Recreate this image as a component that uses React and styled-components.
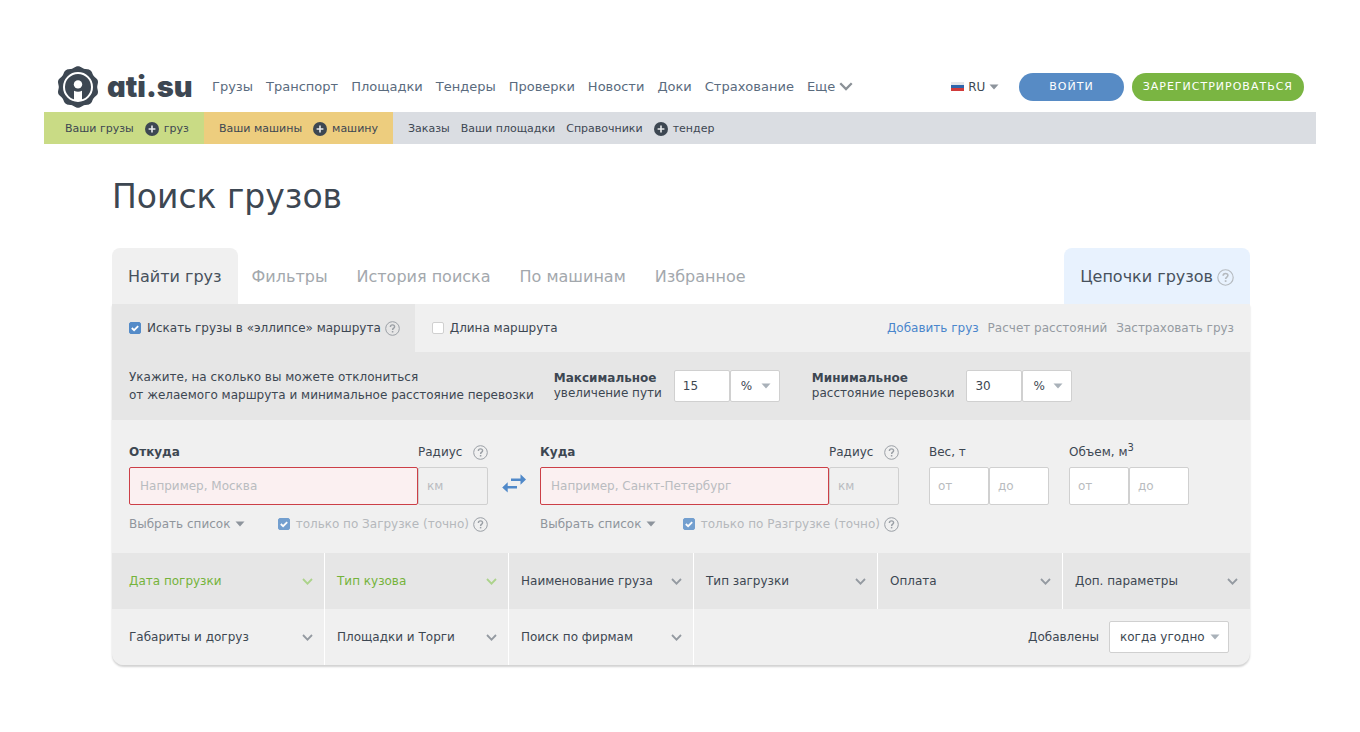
import React from 'react';
import styled, { createGlobalStyle } from 'styled-components';

const GlobalStyle = createGlobalStyle`
  * {
    box-sizing: border-box;
  }
  body {
    margin: 0;
    background: #fff;
    color: #3d4752;
    font-family: 'DejaVu Sans', Verdana, sans-serif;
    font-size: 12px;
    line-height: 16px;
  }
  input, select, button {
    font-family: inherit;
    font-size: inherit;
    color: inherit;
    margin: 0;
  }
  a {
    text-decoration: none;
    color: inherit;
  }
`
const Page = styled.div`
  padding: 60px 44px 64px;
`
const Header = styled.header`
  display: flex;
  align-items: center;
  height: 52px;
  padding: 1px 12px 0 13px;
`
const Logo = styled.a`
  display: flex;
  align-items: center;
  gap: 8px;
  width: 155px;
  flex: none;
  font-family: Inter, sans-serif;
  font-size: 29px;
  line-height: 32px;
  font-weight: 900;
  font-feature-settings: 'cv11', 'ss03';
`
const Nav = styled.nav`
  display: flex;
  align-items: center;
  gap: 13px;
  font-size: 13px;
  color: #5a6b7e;
  white-space: nowrap;
`
const NavMore = styled.a`
  display: flex;
  align-items: center;
  gap: 4px;
`
const Account = styled.div`
  display: flex;
  align-items: center;
  gap: 8px;
  margin-left: auto;
`
const LangButton = styled.button`
  display: flex;
  align-items: center;
  gap: 4px;
  margin-right: 12px;
  padding: 0;
  border: 0;
  background: none;
`
const RoundButton = styled.button`
  height: 28px;
  padding: 0 ${p => p.$pad}px;
  border: 0;
  border-radius: 14px;
  background: ${p => p.$color};
  color: #fff;
  font-size: 11px;
  letter-spacing: 1px;
  white-space: nowrap;
`
const SubBar = styled.nav`
  display: flex;
  height: 32px;
  background: #dadde2;
  font-size: 11px;
`
const SubGroup = styled.div`
  display: flex;
  align-items: center;
  gap: 11px;
  padding: 1px 15px 0 ${p => p.$left || 15}px;
  background: ${p => p.$color || 'transparent'};
  white-space: nowrap;
`
const AddLink = styled.a`
  display: flex;
  align-items: center;
  gap: 5px;
`
const Main = styled.main`
  margin: 0 66px 0 68px;
`
const Title = styled.h1`
  margin: 32px 0 30px;
  font-size: 33px;
  line-height: 42px;
  font-weight: 400;
`
const Tabs = styled.nav`
  display: flex;
  height: 56px;
  font-size: 16px;
  white-space: nowrap;
`
const Tab = styled.a`
  display: flex;
  align-items: center;
  gap: 4px;
  padding: ${p => (p.$bg ? '2px 16px 0' : '2px 15px 0 14px')};
  border-radius: 8px 8px 0 0;
  background: ${p => p.$bg || 'transparent'};
  color: ${p => (p.$bg ? '#47515c' : '#a3a8ad')};
  margin-left: ${p => (p.$right ? 'auto' : '0')};
`
const Panel = styled.form`
  background: #f0f0f0;
  border-radius: 0 0 12px 12px;
  box-shadow: 0 2px 2px #d2d2d2;
  overflow: hidden;
`
const Options = styled.div`
  display: flex;
  align-items: center;
  height: 48px;
  white-space: nowrap;
`
const Option = styled.div`
  display: flex;
  align-items: center;
  gap: 4px;
  align-self: stretch;
  padding: 0 15px 0 17px;
  background: ${p => (p.$active ? '#e6e6e6' : 'transparent')};
`
const OptionLinks = styled.div`
  display: flex;
  gap: 9px;
  margin-left: auto;
  padding-right: 16px;
`
const OptionLink = styled.a`
  color: ${p => (p.$main ? '#4a86cc' : '#959ba2')};
`
const Deviation = styled.div`
  display: flex;
  align-items: center;
  height: 68px;
  padding: 0 16px 0 17px;
  background: #e6e6e6;
  white-space: nowrap;
`
const Hint = styled.p`
  margin: 0 20px 0 0;
  line-height: 18px;
`
const LimitLabel = styled.label`
  margin-right: 12px;
  line-height: 15px;
`
const Limit = styled.div`
  display: flex;
  margin-right: 32px;
`
const Input = styled.input`
  width: ${p => p.$width || '100%'};
  min-width: 0;
  height: ${p => p.$height || 38}px;
  padding: 0 ${p => p.$pad || 8}px;
  border: 1px solid ${p => (p.$error ? '#cc3f47' : '#d0d0d0')};
  border-radius: 2px;
  background: ${p => (p.$error ? '#fbf0f1' : p.disabled ? '#f0f0f0' : '#fff')};
  outline: 0;
  &::placeholder {
    color: #b9bcc0;
    opacity: 1;
  }
`
const SelectBox = styled.span`
  position: relative;
  display: block;
  width: ${p => p.$width}px;
  svg {
    position: absolute;
    right: 9px;
    top: 13px;
    pointer-events: none;
  }
`
const Select = styled.select`
  appearance: none;
  width: 100%;
  height: 32px;
  padding: 0 10px;
  border: 1px solid #d0d0d0;
  border-radius: 2px;
  background: #fff;
`
const CheckLabel = styled.label`
  display: flex;
  align-items: center;
  gap: 6px;
  color: ${p => (p.$muted ? '#b5b8bc' : 'inherit')};
`
const CheckBox = styled.span`
  position: relative;
  display: block;
  width: 12px;
  height: 12px;
  opacity: ${p => (p.$muted ? 0.8 : 1)};
  svg {
    position: absolute;
    left: 0;
    top: 0;
    pointer-events: none;
  }
`
const CheckInput = styled.input`
  appearance: none;
  display: block;
  width: 12px;
  height: 12px;
  border: 1px solid #d0d0d0;
  border-radius: 2px;
  background: #fff;
  &:checked {
    border-color: #548bc8;
    background: #548bc8;
  }
  &:not(:checked) + svg {
    display: none;
  }
`
const Fields = styled.div`
  display: flex;
  padding: 24px 61px 21px 17px;
`
const Place = styled.div`
  flex: 1;
  display: grid;
  grid-template-columns: 1fr 70px;
  row-gap: 7px;
  white-space: nowrap;
`
const FieldLabel = styled.label`
  font-weight: ${p => (p.$bold ? 700 : 400)};
`
const RadiusHead = styled.div`
  display: flex;
  align-items: center;
  justify-content: space-between;
`
const PlaceFooter = styled.div`
  grid-column: 1 / 3;
  display: flex;
  align-items: center;
  justify-content: space-between;
  padding-top: 4px;
`
const FooterCheck = styled.div`
  display: flex;
  align-items: center;
  gap: 4px;
`
const ListButton = styled.button`
  display: flex;
  align-items: center;
  gap: 5px;
  padding: 0;
  border: 0;
  background: none;
  color: #8f959c;
`
const SwapButton = styled.button`
  width: 52px;
  height: 38px;
  margin-top: 23px;
  padding: 0 0 5px;
  border: 0;
  background: none;
  display: flex;
  align-items: center;
  justify-content: center;
`
const Range = styled.div`
  width: 120px;
  margin-left: ${p => p.$gap}px;
`
const RangeInputs = styled.div`
  display: flex;
  margin-top: 7px;
`
const Cube = styled.sup`
  font-size: 10px;
  line-height: 0;
`
const Filters = styled.div`
  display: grid;
  grid-template-columns: 213fr 184fr 185fr 184fr 185fr 187fr;
`
const Filter = styled.button`
  display: flex;
  align-items: center;
  justify-content: space-between;
  height: 56px;
  padding: 0 11px 0 ${p => (p.$first ? 17 : 12)}px;
  border: 0;
  border-right: 1px solid ${p => (p.$last ? 'transparent' : '#fff')};
  background: ${p => (p.$dark ? '#e6e6e6' : '#f0f0f0')};
  color: ${p => (p.$green ? '#75b33b' : 'inherit')};
  white-space: nowrap;
`
const Added = styled.div`
  grid-column: 4 / 7;
  display: flex;
  align-items: center;
  justify-content: flex-end;
  gap: 10px;
  padding-right: 21px;
`

// wavy gear outline with ten teeth
const gear = Array.from({ length: 120 }, (_, i) => {
  const a = (i / 120) * Math.PI * 2
  const r = 20 + 0.8 * Math.cos(a * 10)
  return `${(21 + r * Math.sin(a)).toFixed(2)},${(21 - r * Math.cos(a)).toFixed(2)}`
}).join(' ')

const LogoIcon = () => (
  <svg width="42" height="42" viewBox="0 0 42 42" aria-hidden="true">
    <polygon points={gear} fill="#3d4752" />
    <circle cx="21" cy="21" r="14" fill="none" stroke="#fff" strokeWidth="2" />
    <circle cx="21" cy="18.4" r="4.2" fill="#fff" />
    <path d="M17 24.8q4 2 8 0v9.2q-4 1.2-8 0z" fill="#fff" />
  </svg>
)

const PlusIcon = () => (
  <svg width="14" height="14" viewBox="0 0 14 14" aria-hidden="true">
    <circle cx="7" cy="7" r="7" fill="#3d4752" />
    <path d="M7 3.6v6.8M3.6 7h6.8" stroke="#e8eaec" strokeWidth="1.6" />
  </svg>
)

const Chevron = ({ width = 11, height = 7, color = '#949aa1' }) => (
  <svg width={width} height={height} viewBox="0 0 11 7" fill="none" aria-hidden="true">
    <path d="M1 1l4.5 4.6L10 1" stroke={color} strokeWidth="1.8" />
  </svg>
)

const Caret = ({ color = '#8d949c' }) => (
  <svg width="10" height="6" viewBox="0 0 10 6" aria-hidden="true">
    <path d="M.5.5h9L5 5.5z" fill={color} />
  </svg>
)

const HelpIcon = ({ size = 15, color = '#9a9fa5' }) => (
  <svg width={size} height={size} viewBox="0 0 15 15" fill="none" stroke={color} aria-hidden="true">
    <circle cx="7.5" cy="7.5" r="6.8" />
    <path d="M5.4 6c0-1.4.9-2.1 2.1-2.1s2.1.7 2.1 1.8c0 1.4-2 1.5-2 3.2" strokeWidth="1.4" />
    <path d="M7.6 9.9v1.5" strokeWidth="1.5" />
  </svg>
)

const Flag = () => (
  <svg width="13" height="9" viewBox="0 0 13 9" aria-hidden="true">
    <path d="M0 0h13v9H0z" fill="#e4e6e9" />
    <path d="M0 3h13v3H0z" fill="#2f66ac" />
    <path d="M0 6h13v3H0z" fill="#d13b3b" />
  </svg>
)

const SwapIcon = () => (
  <svg width="24" height="19" viewBox="0 0 24 19" fill="#5089c9" aria-hidden="true">
    <path d="M9 4.4h9.5V.2L24 5.6l-5.5 5.2V6.9H9z" />
    <path d="M15 12.1H5.7V8.2L.2 13.4l5.5 5.2v-4H15z" />
  </svg>
)

const Check = ({ id, label, checked, muted }) => (
  <CheckLabel htmlFor={id} $muted={muted}>
    <CheckBox $muted={muted}>
      <CheckInput id={id} type="checkbox" defaultChecked={checked} />
      <svg width="12" height="12" viewBox="0 0 12 12" fill="none" aria-hidden="true">
        <path d="M2.8 6l2.3 2.2 4.1-4.1" stroke="#fff" strokeWidth="1.8" />
      </svg>
    </CheckBox>
    {label}
  </CheckLabel>
)

const LimitField = ({ id, title, text, value }) => (
  <>
    <LimitLabel htmlFor={id}><b>{title}</b><br />{text}</LimitLabel>
    <Limit>
      <Input id={id} $width="56px" $height={32} defaultValue={value} />
      <SelectBox $width={50}>
        <Select aria-label={`${title} ${text}, единица`}><option>%</option><option>км</option></Select>
        <Caret color="#a9b1b9" />
      </SelectBox>
    </Limit>
  </>
)

const PlaceField = ({ id, title, placeholder, exact }) => (
  <Place>
    <FieldLabel htmlFor={id} $bold>{title}</FieldLabel>
    <RadiusHead><FieldLabel htmlFor={`${id}-radius`}>Радиус</FieldLabel><HelpIcon /></RadiusHead>
    <Input id={id} $error $pad={10} placeholder={placeholder} />
    <Input id={`${id}-radius`} disabled placeholder="км" />
    <PlaceFooter>
      <ListButton type="button">Выбрать список <Caret /></ListButton>
      <FooterCheck>
        <Check id={`${id}-exact`} label={exact} checked muted />
        <HelpIcon />
      </FooterCheck>
    </PlaceFooter>
  </Place>
)

const RangeField = ({ id, label, gap }) => (
  <Range $gap={gap}>
    <FieldLabel htmlFor={id}>{label}</FieldLabel>
    <RangeInputs>
      <Input id={id} placeholder="от" />
      <Input aria-label="до" placeholder="до" />
    </RangeInputs>
  </Range>
)

const navLinks = ['Грузы', 'Транспорт', 'Площадки', 'Тендеры', 'Проверки', 'Новости', 'Доки', 'Страхование']
const tabs = ['Фильтры', 'История поиска', 'По машинам', 'Избранное']
const filters = [
  { title: 'Дата погрузки', green: true },
  { title: 'Тип кузова', green: true },
  { title: 'Наименование груза' },
  { title: 'Тип загрузки' },
  { title: 'Оплата' },
  { title: 'Доп. параметры' },
]
const moreFilters = ['Габариты и догруз', 'Площадки и Торги', 'Поиск по фирмам']

export default function App() {
  return (
    <Page>
      <GlobalStyle />
      <Header>
        <Logo href="#"><LogoIcon />ati.su</Logo>
        <Nav>
          {navLinks.map(link => <a href="#" key={link}>{link}</a>)}
          <NavMore href="#">Еще <Chevron width={14} height={9} color="#8b9197" /></NavMore>
        </Nav>
        <Account>
          <LangButton type="button"><Flag />RU <Caret /></LangButton>
          <RoundButton type="button" $color="#578bc5" $pad={30}>ВОЙТИ</RoundButton>
          <RoundButton type="button" $color="#7ab542" $pad={11}>ЗАРЕГИСТРИРОВАТЬСЯ</RoundButton>
        </Account>
      </Header>
      <SubBar>
        <SubGroup $color="#c9db85" $left={21}>
          <a href="#">Ваши грузы</a>
          <AddLink href="#"><PlusIcon />груз</AddLink>
        </SubGroup>
        <SubGroup $color="#edcd7e">
          <a href="#">Ваши машины</a>
          <AddLink href="#"><PlusIcon />машину</AddLink>
        </SubGroup>
        <SubGroup>
          <a href="#">Заказы</a>
          <a href="#">Ваши площадки</a>
          <a href="#">Справочники</a>
          <AddLink href="#"><PlusIcon />тендер</AddLink>
        </SubGroup>
      </SubBar>
      <Main>
        <Title>Поиск грузов</Title>
        <Tabs>
          <Tab href="#" $bg="#f0f0f0">Найти груз</Tab>
          {tabs.map(tab => <Tab href="#" key={tab}>{tab}</Tab>)}
          <Tab href="#" $bg="#e8f2fe" $right>Цепочки грузов <HelpIcon size={17} color="#b5babf" /></Tab>
        </Tabs>
        <Panel>
          <Options>
            <Option $active>
              <Check id="ellipse" label="Искать грузы в «эллипсе» маршрута" checked />
              <HelpIcon />
            </Option>
            <Option>
              <Check id="length" label="Длина маршрута" />
            </Option>
            <OptionLinks>
              <OptionLink href="#" $main>Добавить груз</OptionLink>
              <OptionLink href="#">Расчет расстояний</OptionLink>
              <OptionLink href="#">Застраховать груз</OptionLink>
            </OptionLinks>
          </Options>
          <Deviation>
            <Hint>
              Укажите, на сколько вы можете отклониться<br />
              от желаемого маршрута и минимальное расстояние перевозки
            </Hint>
            <LimitField id="max-way" title="Максимальное" text="увеличение пути" value="15" />
            <LimitField id="min-way" title="Минимальное" text="расстояние перевозки" value="30" />
          </Deviation>
          <Fields>
            <PlaceField id="from" title="Откуда" placeholder="Например, Москва" exact="только по Загрузке (точно)" />
            <SwapButton type="button" aria-label="Поменять местами"><SwapIcon /></SwapButton>
            <PlaceField id="to" title="Куда" placeholder="Например, Санкт-Петербург" exact="только по Разгрузке (точно)" />
            <RangeField id="weight" label="Вес, т" gap={30} />
            <RangeField id="volume" label={<>Объем, м<Cube>3</Cube></>} gap={20} />
          </Fields>
          <Filters>
            {filters.map((f, i) => (
              <Filter type="button" key={f.title} $dark $green={f.green} $first={i === 0} $last={i === 5}>
                {f.title}
                <Chevron color={f.green ? '#acd38b' : undefined} />
              </Filter>
            ))}
            {moreFilters.map((title, i) => (
              <Filter type="button" key={title} $first={i === 0}>{title}<Chevron /></Filter>
            ))}
            <Added>
              <label htmlFor="added">Добавлены</label>
              <SelectBox $width={120}>
                <Select id="added"><option>когда угодно</option></Select>
                <Caret color="#a9b1b9" />
              </SelectBox>
            </Added>
          </Filters>
        </Panel>
      </Main>
    </Page>
  );
}
